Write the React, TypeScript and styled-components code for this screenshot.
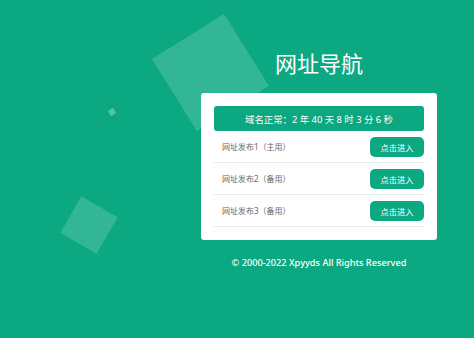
import React from 'react'
import styled, { createGlobalStyle } from 'styled-components'

const GlobalStyle = createGlobalStyle`
  html, body {
    margin: 0;
    padding: 0;
    background: #0ba882;
  }
  body {
    font-family: "Noto Sans", "Noto Sans CJK SC", sans-serif;
  }
`

const Page = styled.div`
  position: relative;
  overflow: hidden;
  width: 474px;
  height: 338px;
  background: #0ba882;
`

const Square = styled.div<{ $size: number; $x: number; $y: number; $rotate: number; $alpha?: number }>`
  position: absolute;
  width: ${({ $size }) => $size}px;
  height: ${({ $size }) => $size}px;
  left: ${({ $x, $size }) => $x - $size / 2}px;
  top: ${({ $y, $size }) => $y - $size / 2}px;
  transform: rotate(${({ $rotate }) => $rotate}deg);
  background: rgba(255, 255, 255, ${({ $alpha }) => $alpha ?? 0.16});
`

const Main = styled.div`
  position: relative;
  z-index: 1;
  display: flex;
  justify-content: flex-end;
  padding: 49px 37px 0 0;
`

const Column = styled.div`
  width: 236px;
  display: flex;
  flex-direction: column;
  align-items: stretch;
`

const Title = styled.h1`
  margin: 0 0 18px;
  font-size: 22px;
  line-height: 26px;
  font-weight: 400;
  color: #fff;
  text-align: center;
  font-family: "Noto Sans CJK SC", sans-serif;
`

const Card = styled.div`
  background: #fff;
  border-radius: 3px;
  padding: 13px;
`

const Status = styled.div`
  height: 25px;
  border-radius: 3px;
  background: #0ba882;
  color: #fff;
  font-size: 9.4px;
  display: flex;
  align-items: center;
  justify-content: center;
`

const Row = styled.div`
  height: 31px;
  display: flex;
  align-items: center;
  justify-content: space-between;
  padding-left: 8px;
  border-bottom: 1px solid #eaeaea;
`

const Label = styled.span`
  font-size: 8px;
  color: #666;
`

const EnterButton = styled.a`
  width: 54px;
  height: 20px;
  border-radius: 5px;
  background: #0ba882;
  color: #fff;
  font-size: 8.2px;
  display: flex;
  align-items: center;
  justify-content: center;
  text-decoration: none;
`

const Footer = styled.p`
  margin: 16px 0 0;
  font-size: 9.2px;
  line-height: 14px;
  font-weight: 500;
  color: #fff;
  text-align: center;
`

const links = [
  { name: '网址发布1（主用）' },
  { name: '网址发布2（备用）' },
  { name: '网址发布3（备用）' },
]

const App = () => (
  <>
    <GlobalStyle />
    <Page>
      <Square $size={85} $x={210} $y={72} $rotate={-32} />
      <Square $size={6} $x={112} $y={112} $rotate={-32} $alpha={0.3} />
      <Square $size={42} $x={89} $y={225} $rotate={30} />
      <Main>
        <Column>
          <Title>网址导航</Title>
          <Card>
            <Status>域名正常：2 年 40 天 8 时 3 分 6 秒</Status>
            {links.map((l) => (
              <Row key={l.name}>
                <Label>{l.name}</Label>
                <EnterButton href="#">点击进入</EnterButton>
              </Row>
            ))}
          </Card>
          <Footer>© 2000-2022 Xpyyds All Rights Reserved</Footer>
        </Column>
      </Main>
    </Page>
  </>
)

export default App
